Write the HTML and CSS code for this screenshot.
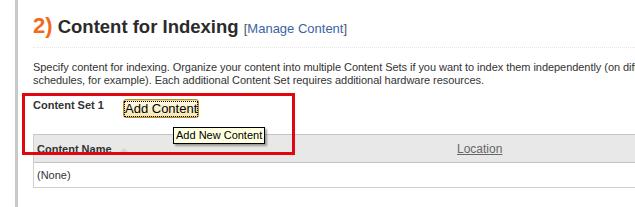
FILE: index.html
```html
<!DOCTYPE html>
<html lang="en">
<head>
<meta charset="UTF-8" />
<title>Content for Indexing</title>
<link rel="stylesheet" href="styles.css">
</head>
<body>
<div class="page">
  <!-- step header -->
  <h2 class="stepTitle"><span class="stepNum">2)</span> Content for Indexing <span class="stepLink">[<a href="#">Manage Content</a>]</span></h2>

  <p class="intro">Specify content for indexing. Organize your content into multiple Content Sets if you want to index them independently (on different schedules, for example). Each additional Content Set requires additional hardware resources.</p>

  <div class="setRow">
    <span class="setLabel">Content Set 1</span>
    <button class="addBtn" title="Add New Content"><span class="focusRing">Add Content</span></button>
  </div>

  <table class="contentTable">
    <tr>
      <th class="colName">Content Name <span class="sortArrow"></span></th>
      <th class="colLoc"><a href="#">Location</a></th>
    </tr>
    <tr>
      <td>(None)</td>
      <td></td>
    </tr>
  </table>

  <!-- annotation + tooltip -->
  <div class="highlight"></div>
  <div class="tooltip">Add New Content</div>
</div>
</body>
</html>
```

FILE: styles.css
```css
html, body {
  margin: 0;
  overflow: hidden;
  background: #fff;
}
body {
  font-family: "Liberation Sans", Arial, sans-serif;
  color: #333;
}

.page {
  position: relative;
  width: 900px;
  min-height: 207px;
  margin-left: 15px;
  border-left: 3px solid #c9c9c9;
  padding: 12px 0 0 15px;
  box-sizing: border-box;
}

/* Заголовок шага */
.stepTitle {
  margin: 0;
  font-size: 18.5px;
  line-height: 28px;
  font-weight: bold;
  color: #2b2b2b;
  padding-bottom: 4px;
  border-bottom: 1px dotted #e6e6e6;
}
.stepNum {
  font-size: 22px;
  color: #f26a1b;
}
.stepLink {
  font-size: 13px;
  font-weight: normal;
  color: #555;
}
.stepLink a {
  color: #3d63a6;
  text-decoration: none;
}

.intro {
  margin: 13px 0 0;
  width: 660px;
  font-size: 11px;
  line-height: 13px;
  letter-spacing: -0.05px;
  color: #333;
}

/* Content Set row */
.setRow {
  display: flex;
  align-items: flex-start;
  margin-top: 12px;
}
.setLabel {
  width: 90px;
  font-size: 11px;
  line-height: 13px;
  font-weight: bold;
  color: #333;
}
.addBtn {
  height: 19px;
  width: 76px;
  padding: 1px 1px;
  font-family: "Liberation Sans", Arial, sans-serif;
  font-size: 13px;
  white-space: nowrap;
  color: #000;
  background: linear-gradient(#fffbe8, #f5e7b4);
  border: 1px solid #b8892a;
  border-radius: 3px;
  box-shadow: inset 0 0 0 1px #f7d57a;
  cursor: pointer;
}
.focusRing {
  display: block;
  line-height: 14px;
  outline: 1px dotted #000;
}

/* Table */
.contentTable {
  margin-top: 16px;
  width: 870px;
  border-spacing: 0;
  border-left: 1px solid #cfcfcf;
  font-size: 11px;
}
.contentTable th {
  height: 29px;
  padding: 0 3px;
  background: #e8e8e8;
  border-top: 1px solid #c4c4c4;
  border-bottom: 1px solid #c4c4c4;
  text-align: left;
  vertical-align: middle;
  box-sizing: border-box;
}
.colName {
  width: 420px;
  color: #333;
}
.colLoc {
  padding-left: 4px;
}
.colLoc a {
  font-size: 12px;
  font-weight: normal;
  color: #666;
  text-decoration: underline;
}
.sortArrow {
  display: inline-block;
  margin-left: 5px;
  width: 0;
  height: 0;
  border-left: 4px solid transparent;
  border-right: 4px solid transparent;
  border-bottom: 4px solid #d4d4d4;
  vertical-align: 1px;
}
.contentTable td {
  height: 25px;
  padding: 0 3px;
  border-bottom: 1px solid #cfcfcf;
  box-sizing: border-box;
  color: #333;
}

/* Red annotation box */
.highlight {
  position: absolute;
  left: 4px;
  top: 93px;
  width: 273px;
  height: 62px;
  border: 3px solid #e2070f;
  box-sizing: border-box;
}

.tooltip {
  position: absolute;
  left: 155px;
  top: 127px;
  padding: 0 2px;
  font-size: 11px;
  line-height: 15px;
  color: #000;
  background: #ffffe1;
  border: 1px solid #000;
  box-shadow: 2px 2px 2px rgba(0, 0, 0, 0.35);
}
```
